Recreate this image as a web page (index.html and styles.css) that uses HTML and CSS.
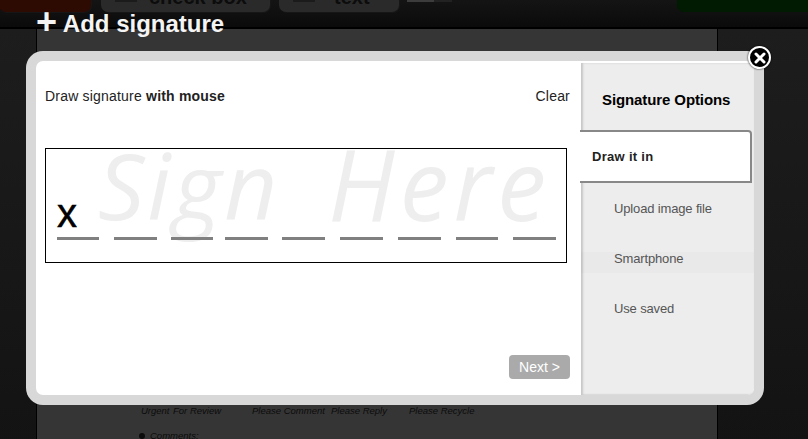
FILE: index.html
```html
<!DOCTYPE html>
<html lang="en">
<head>
<meta charset="utf-8">
<title>Add signature</title>
<link rel="stylesheet" href="styles.css">
</head>
<body>
<div class="page">
  <header class="toolbar">
    <div class="tool tool-red"></div>
    <div class="tool tool-check"><span class="tool-icon"></span><span class="tool-label">check box</span></div>
    <div class="tool tool-text"><span class="tool-icon"></span><span class="tool-label">text</span></div>
    <div class="slider"></div>
    <div class="tool tool-green"></div>
  </header>
  <main class="desk">
    <div class="doc">
      <div class="doc-row">
        <span class="w-urgent">Urgent</span><span class="w-review">For Review</span><span class="w-comment">Please Comment</span><span class="w-reply">Please Reply</span><span>Please Recycle</span>
      </div>
      <div class="doc-comments"><span class="bullet"></span><span>Comments:</span></div>
    </div>
  </main>

  <h1 class="title"><span class="plus">+</span> Add signature</h1>

  <section class="modal">
    <div class="panel">
      <div class="draw">
        <div class="draw-head">
          <span>Draw signature <b>with mouse</b></span>
          <span>Clear</span>
        </div>
        <div class="canvas">
          <span class="ghost ghost-sign">Sign</span>
          <span class="ghost ghost-here">Here</span>
          <span class="mark">x</span>
          <svg class="guide" width="520" height="4" viewBox="0 0 520 4" aria-hidden="true">
            <g fill="#808080">
              <rect x="11" y="1" width="42" height="3"/><rect x="68" y="1" width="43" height="3"/><rect x="125" y="1" width="42" height="3"/><rect x="179" y="1" width="43" height="3"/><rect x="236" y="1" width="43" height="3"/><rect x="294" y="1" width="43" height="3"/><rect x="352" y="1" width="43" height="3"/><rect x="410" y="1" width="42" height="3"/><rect x="467" y="1" width="43" height="3"/>
            </g>
          </svg>
        </div>
        <div class="draw-foot"><button class="next" type="button">Next &gt;</button></div>
      </div>
      <nav class="side">
        <div class="side-title">Signature Options</div>
        <div class="opt opt-active">Draw it in</div>
        <div class="opt">Upload image file</div>
        <div class="opt opt-hover"><span>Smartphone</span></div>
        <div class="opt">Use saved</div>
      </nav>
    </div>
    <button class="close" type="button" aria-label="Close">
      <svg width="12" height="12" viewBox="0 0 12 12" aria-hidden="true"><path d="M2 2 L10 10 M10 2 L2 10" stroke="#fff" stroke-width="3" stroke-linecap="round"/></svg>
    </button>
  </section>
</div>
</body>
</html>
```

FILE: styles.css
```css
* { box-sizing: border-box; }
html, body { margin: 0; padding: 0; background: #141414; }
body { font-family: "Liberation Sans", Arial, sans-serif; }

.page {
  position: relative;
  width: 808px;
  height: 439px;
  overflow: hidden;
  display: flex;
  flex-direction: column;
}

.toolbar {
  flex: 0 0 29px;
  display: flex;
  align-items: flex-start;
  background: linear-gradient(#141414, #0b0b0b);
  border-bottom: 2px solid #000;
}
.tool {
  flex: none;
  height: 30px;
  margin-top: -18px;
  padding-left: 14px;
  border-radius: 7px;
  display: flex;
  align-items: flex-end;
  background: #2a2a2a;
  box-shadow: 1px 1px 0 #161616;
  color: #0c0c0c;
  font-weight: bold;
  font-size: 20px;
  overflow: hidden;
}
.tool-label { line-height: 21px; padding-bottom: 4px; }
.tool-icon { width: 22px; height: 12px; margin-bottom: 10px; background: #1b1b1b; }
.tool-red { width: 92px; margin-left: -1px; background: #2d0a02; }
.tool-check { width: 169px; margin-left: 10px; gap: 12px; }
.tool-text { width: 120px; margin-left: 9px; gap: 19px; }
.slider {
  flex: none;
  width: 45px;
  height: 2px;
  margin-left: 8px;
  background: linear-gradient(90deg, #3c3c3c 60%, #222 60%);
}
.tool-green { width: 140px; margin-left: 225px; background: #011a02; box-shadow: none; }

.desk {
  flex: 1;
  display: flex;
  padding-left: 36px;
  background: linear-gradient(#1d1d1d, #131313);
}
.doc {
  width: 682px;
  border-left: 1px solid #000;
  border-right: 1px solid #000;
  background: #353535;
  padding: 376px 0 0 104px;
  font-size: 9.5px;
  font-style: italic;
  color: #0c0c0c;
}
.doc-row { display: flex; line-height: 12px; white-space: nowrap; }
.w-urgent { width: 32px; }
.w-review { width: 79px; }
.w-comment { width: 79px; }
.w-reply { width: 78px; }
.doc-comments {
  display: flex;
  align-items: center;
  gap: 5px;
  margin: 13px 0 0 -2px;
  line-height: 12px;
}
.bullet { width: 6px; height: 6px; border-radius: 50%; background: #0c0c0c; }

.title {
  position: absolute;
  left: 36px;
  top: 7px;
  margin: 0;
  font-size: 24px;
  line-height: 30px;
  font-weight: bold;
  color: #f4f4f4;
  white-space: nowrap;
}
.plus { font-size: 36px; line-height: 30px; font-weight: bold; vertical-align: -2px; }

.modal {
  position: absolute;
  left: 26px;
  top: 51px;
  width: 738px;
  height: 354px;
  padding: 10px;
  border-radius: 17px;
  background: #d8d8d8;
}
.panel {
  display: flex;
  height: 100%;
  border-radius: 7px;
  background: #fff;
  overflow: hidden;
}
.draw {
  flex: 0 0 545px;
  display: flex;
  flex-direction: column;
  padding: 0 11px 0 9px;
  color: #222;
  font-size: 14px;
  letter-spacing: .2px;
}
.draw-head {
  display: flex;
  justify-content: space-between;
  align-items: flex-start;
  height: 87px;
  padding-top: 27px;
  line-height: 16px;
}
.canvas {
  position: relative;
  height: 115px;
  margin-right: 3px;
  border: 1px solid #000;
  overflow: hidden;
}
.ghost {
  position: absolute;
  font-family: "Open Sans", sans-serif;
  font-style: italic;
  font-weight: 400;
  color: #eeeeee;
  white-space: nowrap;
}
.ghost-sign { left: 52px; top: -10px; font-size: 92px; line-height: 92px; letter-spacing: 3px; }
.ghost-here { left: 282px; top: -15px; font-size: 98px; line-height: 98px; letter-spacing: 5px; }
.mark {
  position: absolute;
  left: 11px;
  top: 42px;
  font-size: 40px;
  line-height: 44px;
  letter-spacing: 0;
  color: #000;
  -webkit-text-stroke: .5px #000;
}
.guide { position: absolute; left: 0; top: 87px; display: block; }
.draw-foot {
  flex: 1;
  display: flex;
  justify-content: flex-end;
  align-items: flex-end;
  padding-bottom: 16px;
}
.next {
  width: 61px;
  height: 24px;
  padding: 0;
  border: 0;
  border-radius: 4px;
  background: #aaa;
  color: #fff;
  font: 14px "Liberation Sans", Arial, sans-serif;
}

.side {
  flex: 0 0 173px;
  margin-top: 1px;
  background: #ededed;
  box-shadow: inset 2px 0 2px #c8c8c8, inset 0 -1px 1px #e0e0e0;
  border-radius: 0 0 5px 0;
  border-top: 1px solid #fff;
  color: #555;
  display: flex;
  flex-direction: column;
}
.side-title {
  height: 67px;
  padding: 6px 0 0 21px;
  display: flex;
  align-items: center;
  font-weight: bold;
  font-size: 15px;
  letter-spacing: -.1px;
  color: #000;
}
.opt {
  height: 50px;
  padding-left: 33px;
  display: flex;
  align-items: center;
  font-size: 13px;
  letter-spacing: -.15px;
}
.opt-active {
  height: 53px;
  margin-left: -1px;
  width: 172px;
  padding-left: 12px;
  background: #fff;
  border: 2px solid #888;
  border-left: 0;
  border-radius: 0 4px 0 0;
  color: #222;
  font-weight: bold;
  letter-spacing: .3px;
}
.opt-hover { position: relative; }
.opt-hover::before {
  content: "";
  position: absolute;
  left: 0;
  right: 0;
  top: 19px;
  height: 21px;
  background: rgba(0, 0, 0, .015);
}
.opt-hover span { position: relative; }

.close {
  position: absolute;
  left: 722px;
  top: -5px;
  width: 23px;
  height: 23px;
  padding: 0;
  border: 2px solid #fff;
  border-radius: 50%;
  background: #000;
  box-shadow: 0 0 2px #000;
  display: flex;
  align-items: center;
  justify-content: center;
}
```
